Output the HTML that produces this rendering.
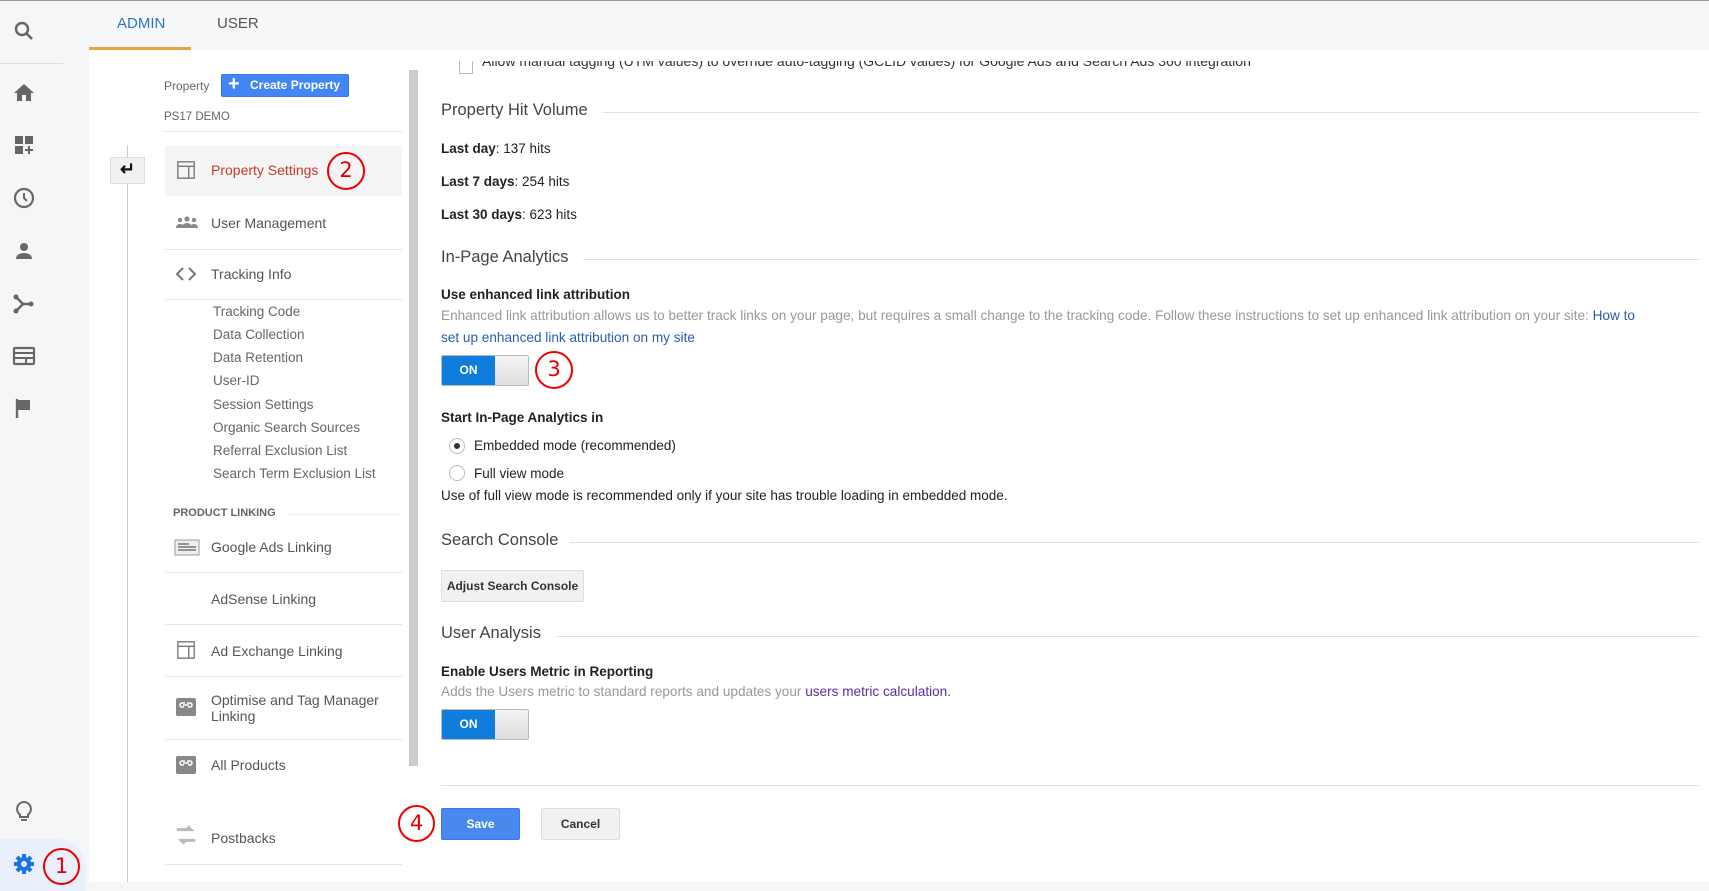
<!DOCTYPE html>
<html><head><meta charset="utf-8"><style>
*{margin:0;padding:0;box-sizing:border-box}
body{width:1709px;height:891px;overflow:hidden;background:#fff;font-family:"Liberation Sans",Arial,sans-serif;position:relative;color:#222}
.a{position:absolute;white-space:nowrap}
.rail{left:0;top:0;width:89px;height:891px;background:#f4f6f8}
.top{left:89px;top:0;width:1620px;height:50px;background:#f6f7f9}
.ic{position:absolute;left:12px;width:24px;height:24px}
.nav{font-size:14px;color:#555}
.sub{font-size:13.5px;color:#666;left:213px}
.ln{position:absolute;height:1px;background:#e6e6e6}
.h{font-size:16.5px;color:#444}
.hl{position:absolute;height:1px;background:#e0e0e0;right:10px}
.t{font-size:13.5px;color:#222}
.circ{position:absolute;border:2.5px solid #e00;border-radius:50%;color:#d00;font-size:21px;text-align:center;font-family:"DejaVu Sans",sans-serif}
.tog{position:absolute;width:88px;height:31px;border:1px solid #bbb;border-radius:2px;overflow:hidden;background:linear-gradient(#f4f4f4,#ddd)}
.tog b{position:absolute;left:0;top:0;width:53px;height:31px;background:#0f7ddb;color:#fff;font-size:12px;line-height:29px;text-align:center}
.ni{position:absolute;left:175px;width:22px;height:20px}
</style></head><body>
<div class="a rail"></div>
<div class="a top"></div>
<div class="a" style="left:0;top:0;width:1709px;height:1px;background:#999"></div>
<div class="a" style="left:0;top:882px;width:1709px;height:9px;background:#f4f6f8"></div>
<div class="a" style="left:89px;top:50px;width:1620px;height:832px;background:#fff"></div>

<svg class="ic" style="top:19px" viewBox="0 0 24 24"><circle cx="10" cy="10" r="6" fill="none" stroke="#666" stroke-width="2.4"/><path d="M14.5 14.5L20 20" stroke="#666" stroke-width="2.6"/></svg>
<div class="a" style="left:0;top:63px;width:63px;height:1px;background:#ddd"></div>
<svg class="ic" style="top:81px" viewBox="0 0 24 24"><path d="M12 3L2 12h3v8h5v-6h4v6h5v-8h3z" fill="#666"/></svg>
<svg class="ic" style="top:133px" viewBox="0 0 24 24"><rect x="3" y="3" width="8" height="8" fill="#666"/><rect x="13" y="3" width="8" height="8" fill="#666"/><rect x="3" y="13" width="8" height="8" fill="#666"/><path d="M17 13v8M13 17h8" stroke="#666" stroke-width="2"/></svg>
<svg class="ic" style="top:186px" viewBox="0 0 24 24"><circle cx="12" cy="12" r="9" fill="none" stroke="#666" stroke-width="2.2"/><path d="M12 7v5l3 3" stroke="#666" stroke-width="2" fill="none"/></svg>
<svg class="ic" style="top:239px" viewBox="0 0 24 24"><circle cx="12" cy="8" r="4" fill="#666"/><path d="M4 20c0-4 4-6 8-6s8 2 8 6z" fill="#666"/></svg>
<svg class="ic" style="top:292px" viewBox="0 0 24 24"><circle cx="4" cy="5" r="2.5" fill="#666"/><circle cx="4" cy="19" r="2.5" fill="#666"/><circle cx="19" cy="12" r="2.5" fill="#666"/><path d="M4 5l7 7h8M4 19l7-7" stroke="#666" stroke-width="2.4" fill="none"/></svg>
<svg class="ic" style="top:344px" viewBox="0 0 24 24"><rect x="2" y="4" width="20" height="16" rx="1" fill="none" stroke="#666" stroke-width="2.2"/><path d="M2 9h20M2 14h20M14 14v6" stroke="#666" stroke-width="2"/></svg>
<svg class="ic" style="top:396px" viewBox="0 0 24 24"><path d="M5 3v19" stroke="#666" stroke-width="2.4"/><path d="M5 4h13v10H5z" fill="#666"/></svg>
<svg class="ic" style="top:800px" viewBox="0 0 24 24"><path d="M12 2a7 7 0 0 0-4 12.7V17h8v-2.3A7 7 0 0 0 12 2z" fill="none" stroke="#666" stroke-width="2"/><path d="M9 20h6" stroke="#666" stroke-width="2"/></svg>
<div class="a" style="left:0;top:839px;width:85px;height:52px;background:#e9f0fc;border-radius:0 26px 0 0"></div>
<svg class="ic" style="top:852px" viewBox="0 0 24 24"><circle cx="12" cy="12" r="7" fill="#1a73e8"/><g stroke="#1a73e8" stroke-width="4"><path d="M12 2v20M2 12h20M5 5l14 14M19 5L5 19"/></g><circle cx="12" cy="12" r="3" fill="#e9f0fc"/></svg>
<div class="circ" style="left:43px;top:848px;width:37px;height:37px;line-height:32px">1</div>

<div class="a" style="left:117px;top:15px;font-size:15px;color:#2f74c0">ADMIN</div>
<div class="a" style="left:89px;top:47px;width:102px;height:3px;background:#e8a33c"></div>
<div class="a" style="left:217px;top:15px;font-size:15px;color:#555">USER</div>

<div class="a" style="left:127px;top:145px;width:1px;height:737px;background:#ccc"></div>
<div class="a" style="left:110px;top:157px;width:35px;height:27px;background:#f1f1f1;border:1px solid #ddd;font-size:18px;text-align:center;line-height:22px;color:#111;font-weight:bold">&#8629;</div>
<div class="a" style="left:164px;top:79px;font-size:12px;color:#666">Property</div>
<div class="a" style="left:221px;top:74px;width:128px;height:23px;background:#4285f4;border:1px solid #3b78e7;border-radius:2px;color:#fff;font-size:12px;font-weight:bold;line-height:21px;padding-left:28px">Create Property</div>
<div class="a" style="left:228px;top:73px;color:#fff;font-size:20px;font-weight:bold">+</div>
<div class="a" style="left:164px;top:111px;font-size:11.5px;color:#666">PS17 DEMO</div>
<div class="ln" style="left:164px;top:131px;width:238px"></div>
<div class="a" style="left:165px;top:146px;width:237px;height:50px;background:#f5f5f5"></div>
<svg class="ni" style="top:160px" viewBox="0 0 22 22"><rect x="2" y="2" width="18" height="18" fill="none" stroke="#777" stroke-width="1.5"/><path d="M2 7h18M14 7v13" stroke="#777" stroke-width="1.5"/></svg>
<div class="a nav" style="left:211px;top:162px;color:#c53929">Property Settings</div>
<div class="circ" style="left:327px;top:152px;width:38px;height:38px;line-height:33px">2</div>
<svg class="ni" style="top:213px;width:24px" viewBox="0 0 24 20"><circle cx="5" cy="7" r="2.2" fill="#888"/><circle cx="12" cy="6" r="2.6" fill="#888"/><circle cx="19" cy="7" r="2.2" fill="#888"/><path d="M1 15c0-3 2-4 4-4s3 1 3 1 1-2 4-2 4 2 4 2 1-1 3-1 4 1 4 4z" fill="#888"/></svg>
<div class="a nav" style="left:211px;top:215px">User Management</div>
<div class="ln" style="left:165px;top:249px;width:237px"></div>
<svg class="ni" style="top:264px" viewBox="0 0 22 20"><path d="M8 4L2 10l6 6M14 4l6 6-6 6" stroke="#777" stroke-width="2" fill="none"/></svg>
<div class="a nav" style="left:211px;top:266px">Tracking Info</div>
<div class="ln" style="left:165px;top:299px;width:237px"></div>
<div class="a sub" style="top:304px">Tracking Code</div>
<div class="a sub" style="top:327px">Data Collection</div>
<div class="a sub" style="top:350px">Data Retention</div>
<div class="a sub" style="top:373px">User-ID</div>
<div class="a sub" style="top:397px">Session Settings</div>
<div class="a sub" style="top:420px">Organic Search Sources</div>
<div class="a sub" style="top:443px">Referral Exclusion List</div>
<div class="a sub" style="top:466px">Search Term Exclusion List</div>
<div class="a" style="left:173px;top:507px;font-size:11px;font-weight:bold;color:#666">PRODUCT LINKING</div>
<div class="ln" style="left:288px;top:514px;width:114px;background:#eee"></div>
<svg class="ni" style="top:538px;width:26px;left:174px" viewBox="0 0 26 18"><rect x="1" y="1" width="24" height="15" fill="#eee" stroke="#999"/><path d="M4 5h11M4 8h18M4 11h18" stroke="#777" stroke-width="1.4"/></svg>
<div class="a nav" style="left:211px;top:539px">Google Ads Linking</div>
<div class="ln" style="left:165px;top:572px;width:237px"></div>
<div class="a nav" style="left:211px;top:591px">AdSense Linking</div>
<div class="ln" style="left:165px;top:624px;width:237px"></div>
<svg class="ni" style="top:640px" viewBox="0 0 22 22"><rect x="2" y="2" width="18" height="18" fill="none" stroke="#777" stroke-width="1.5"/><path d="M2 7h18M14 7v13" stroke="#777" stroke-width="1.5"/></svg>
<div class="a nav" style="left:211px;top:643px">Ad Exchange Linking</div>
<div class="ln" style="left:165px;top:676px;width:237px"></div>
<svg class="ni" style="top:697px" viewBox="0 0 22 20"><rect x="1" y="1" width="20" height="18" rx="2" fill="#888"/><path d="M9 10H7a2 2 0 0 1 0-4h3M13 10h2a2 2 0 0 0 0-4h-3M8 8h6" stroke="#fff" stroke-width="1.5" fill="none"/></svg>
<div class="a nav" style="left:211px;top:692px;line-height:16px">Optimise and Tag Manager<br>Linking</div>
<div class="ln" style="left:165px;top:739px;width:237px"></div>
<svg class="ni" style="top:755px" viewBox="0 0 22 20"><rect x="1" y="1" width="20" height="18" rx="2" fill="#888"/><path d="M9 10H7a2 2 0 0 1 0-4h3M13 10h2a2 2 0 0 0 0-4h-3M8 8h6" stroke="#fff" stroke-width="1.5" fill="none"/></svg>
<div class="a nav" style="left:211px;top:757px">All Products</div>
<svg class="ni" style="top:825px;width:28px;left:172px" viewBox="0 0 28 26"><path d="M2 6h18l-4-4M26 20H8l4 4" stroke="#bbb" stroke-width="4" fill="none"/></svg>
<div class="a nav" style="left:211px;top:830px">Postbacks</div>
<div class="ln" style="left:165px;top:864px;width:237px"></div>
<div class="a" style="left:409px;top:70px;width:9px;height:696px;background:#ccc"></div>

<div class="a" style="left:459px;top:61px;width:14px;height:13px;border:1px solid #bbb;border-top:none"></div>
<div class="a" style="left:482px;top:61px;font-size:14px;color:#333;height:14px;overflow:hidden;width:820px"><span style="position:relative;top:-8px">Allow manual tagging (UTM values) to override auto-tagging (GCLID values) for Google Ads and Search Ads 360 integration</span></div>

<div class="a h" style="left:441px;top:101px">Property Hit Volume</div><div class="hl" style="left:603px;top:112px"></div>
<div class="a t" style="left:441px;top:141px"><b>Last day</b>: 137 hits</div>
<div class="a t" style="left:441px;top:174px"><b>Last 7 days</b>: 254 hits</div>
<div class="a t" style="left:441px;top:207px"><b>Last 30 days</b>: 623 hits</div>
<div class="a h" style="left:441px;top:248px">In-Page Analytics</div><div class="hl" style="left:583px;top:259px"></div>
<div class="a t" style="left:441px;top:287px;font-weight:bold">Use enhanced link attribution</div>
<div class="a" style="left:441px;top:305px;font-size:13.6px;color:#999;line-height:22px">Enhanced link attribution allows us to better track links on your page, but requires a small change to the tracking code. Follow these instructions to set up enhanced link attribution on your site: <span style="color:#2a5db0">How to</span><br><span style="color:#2a5db0">set up enhanced link attribution on my site</span></div>
<div class="tog" style="left:441px;top:355px"><b>ON</b></div>
<div class="circ" style="left:535px;top:351px;width:38px;height:38px;line-height:33px">3</div>
<div class="a t" style="left:441px;top:410px;font-weight:bold">Start In-Page Analytics in</div>
<div class="a" style="left:449px;top:438px;width:16px;height:16px;border:1px solid #bbb;border-radius:50%"><div style="margin:4px;width:6px;height:6px;border-radius:50%;background:#333"></div></div>
<div class="a t" style="left:474px;top:438px">Embedded mode (recommended)</div>
<div class="a" style="left:449px;top:465px;width:16px;height:16px;border:1px solid #bbb;border-radius:50%"></div>
<div class="a t" style="left:474px;top:466px">Full view mode</div>
<div class="a t" style="left:441px;top:488px">Use of full view mode is recommended only if your site has trouble loading in embedded mode.</div>
<div class="a h" style="left:441px;top:531px">Search Console</div><div class="hl" style="left:570px;top:542px"></div>
<div class="a" style="left:441px;top:570px;width:143px;height:32px;background:#f1f1f1;border:1px solid #ddd;border-radius:2px;font-size:12px;font-weight:bold;color:#333;line-height:30px;text-align:center">Adjust Search Console</div>
<div class="a h" style="left:441px;top:624px">User Analysis</div><div class="hl" style="left:556px;top:636px"></div>
<div class="a t" style="left:441px;top:664px;font-weight:bold">Enable Users Metric in Reporting</div>
<div class="a" style="left:441px;top:684px;font-size:13.6px;color:#999">Adds the Users metric to standard reports and updates your <span style="color:#5b2d9e">users metric calculation.</span></div>
<div class="tog" style="left:441px;top:709px"><b>ON</b></div>
<div class="hl" style="left:441px;top:785px"></div>
<div class="a" style="left:441px;top:808px;width:79px;height:32px;background:#4a89ec;border:1px solid #3b78e7;border-radius:2px;color:#fff;font-size:12px;font-weight:bold;line-height:30px;text-align:center">Save</div>
<div class="a" style="left:541px;top:808px;width:79px;height:32px;background:#f1f1f1;border:1px solid #ddd;border-radius:2px;color:#333;font-size:12px;font-weight:bold;line-height:30px;text-align:center">Cancel</div>
<div class="circ" style="left:398px;top:805px;width:37px;height:37px;line-height:32px">4</div>
</body></html>
